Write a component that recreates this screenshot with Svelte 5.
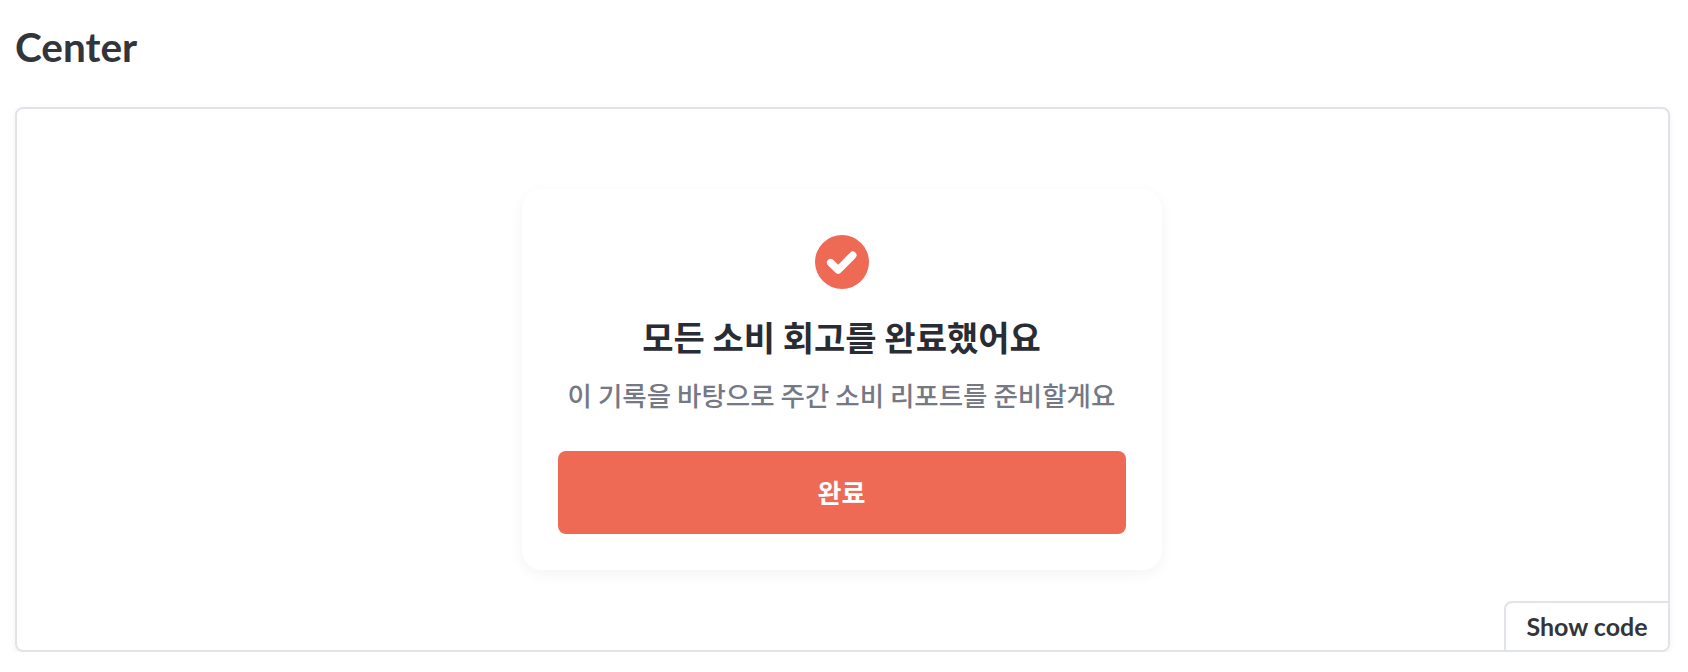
<script>
    const title = '모든 소비 회고를 완료했어요';
    const subtitle = '이 기록을 바탕으로 주간 소비 리포트를 준비할게요';
</script>

<div class="page">
    <h1 class="heading">Center</h1>

    <section class="preview">
        <div class="card">
            <svg class="check" viewBox="0 0 54 54" aria-hidden="true">
                <circle cx="27" cy="27" r="27" fill="#ee6a55" />
                <path d="M15.7 27.7 L23.3 35 L37.7 20.3" fill="none" stroke="#fff" stroke-width="7.5" stroke-linecap="round" stroke-linejoin="round" />
            </svg>
            <h2 class="title">{title}</h2>
            <p class="subtitle">{subtitle}</p>
            <button class="done" type="button">완료</button>
        </div>

        <button class="show-code" type="button">Show code</button>
    </section>
</div>

<style>
    :global(body) {
        margin: 0;
        background: #fff;
    }

    .page {
        padding: 0 18px 0 15px;
        font-family: Lato, "Noto Sans CJK KR", sans-serif;
    }

    .heading {
        margin: 0;
        padding-top: 23px;
        height: 107px;
        box-sizing: border-box;
        font-size: 40.5px;
        line-height: 48px;
        font-weight: 700;
        color: #32353a;
    }

    .preview {
        position: relative;
        box-sizing: border-box;
        height: 545px;
        padding-right: 2px;
        display: flex;
        align-items: center;
        justify-content: center;
        border: 2px solid #e0e3e8;
        border-radius: 8px;
        background: #fff;
        box-shadow: 0 2px 6px rgba(30, 40, 60, 0.06);
        overflow: hidden;
    }

    .card {
        box-sizing: border-box;
        width: 640px;
        height: 381px;
        padding: 46px 36px 36px;
        display: flex;
        flex-direction: column;
        align-items: center;
        border-radius: 20px;
        background: #fff;
        box-shadow: 0 4px 14px rgba(30, 40, 60, 0.05);
        font-family: "Noto Sans CJK KR", sans-serif;
    }

    .check {
        width: 54px;
        height: 54px;
        display: block;
    }

    .title {
        margin: 24px 0 0;
        font-size: 34px;
        line-height: 48px;
        font-weight: 700;
        color: #2a2c33;
    }

    .subtitle {
        margin: 16px 0 0;
        font-size: 26.5px;
        line-height: 36px;
        font-weight: 500;
        color: #757885;
    }

    .done {
        margin-top: 38px;
        width: 100%;
        height: 83px;
        flex: none;
        border: 0;
        border-radius: 8px;
        padding: 0 0 3px;
        background: #ee6a55;
        color: #fff;
        font-family: inherit;
        font-size: 26px;
        font-weight: 700;
    }

    .show-code {
        position: absolute;
        right: 0;
        bottom: 0;
        width: 164px;
        height: 49px;
        box-sizing: border-box;
        border: 2px solid #e0e3e8;
        border-width: 2px 0 0 2px;
        border-radius: 8px 0 0 0;
        background: #fff;
        color: #32353a;
        font-family: Lato, sans-serif;
        font-size: 25px;
        font-weight: 700;
        padding: 0 0 2px;
    }
</style>
